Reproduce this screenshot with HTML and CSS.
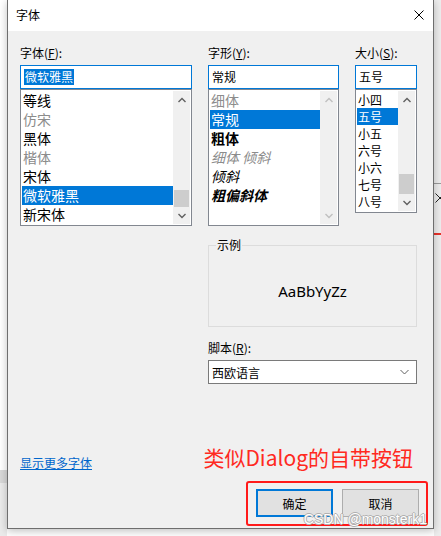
FILE: index.html
```html
<!DOCTYPE html>
<html lang="zh-CN">
<head>
  <meta charset="UTF-8">
  <meta name="viewport" content="width=device-width, initial-scale=1.0">
  <title>字体</title>
  <link rel="stylesheet" href="styles.css">
</head>
<body>
  <!-- windows lying behind the dialog -->
  <div class="desk-left">
    <div class="desk-left-bar"></div>
  </div>
  <div class="desk-right">
    <div class="desk-right-line"></div>
    <svg class="desk-right-close" width="7" height="10" viewBox="0 0 7 10">
      <path d="M0.5 0.5 L9.5 9.5 M9.5 0.5 L0.5 9.5" stroke="#222" stroke-width="1" fill="none"/>
    </svg>
    <div class="desk-right-red"></div>
  </div>

  <div class="dialog">
    <div class="titlebar">
      <span class="title">字体</span>
      <svg class="close-icon" width="10" height="10" viewBox="0 0 10 10">
        <path d="M0.5 0.5 L9.5 9.5 M9.5 0.5 L0.5 9.5" stroke="#000" stroke-width="1" fill="none"/>
      </svg>
    </div>

    <div class="dialog-body">
      <div class="font-grid">
        <!-- font family -->
        <div class="field">
          <label class="field-label">字体(<u>F</u>):</label>
          <div class="textbox"><span class="selected-text">微软雅黑</span></div>
          <div class="listbox list-family">
            <ul class="list-items">
              <li>等线</li>
              <li class="faint">仿宋</li>
              <li>黑体</li>
              <li class="faint">楷体</li>
              <li>宋体</li>
              <li class="active">微软雅黑</li>
              <li>新宋体</li>
            </ul>
            <div class="scrollbar">
              <div class="scroll-btn">
                <svg width="8" height="6" viewBox="0 0 8 6"><path d="M0.5 5 L4 1.5 L7.5 5" class="chev"/></svg>
              </div>
              <div class="scroll-track"><div class="scroll-thumb thumb-family"></div></div>
              <div class="scroll-btn">
                <svg width="8" height="6" viewBox="0 0 8 6"><path d="M0.5 1 L4 4.5 L7.5 1" class="chev"/></svg>
              </div>
            </div>
          </div>
        </div>

        <!-- font style -->
        <div class="field">
          <label class="field-label">字形(<u>Y</u>):</label>
          <div class="textbox">常规</div>
          <div class="listbox list-style">
            <ul class="list-items">
              <li class="faint">细体</li>
              <li class="active">常规</li>
              <li class="bold">粗体</li>
              <li class="faint italic">细体 倾斜</li>
              <li class="italic">倾斜</li>
              <li class="bold italic">粗偏斜体</li>
            </ul>
            <div class="scrollbar disabled">
              <div class="scroll-btn">
                <svg width="8" height="6" viewBox="0 0 8 6"><path d="M0.5 5 L4 1.5 L7.5 5" class="chev"/></svg>
              </div>
              <div class="scroll-track"></div>
              <div class="scroll-btn">
                <svg width="8" height="6" viewBox="0 0 8 6"><path d="M0.5 1 L4 4.5 L7.5 1" class="chev"/></svg>
              </div>
            </div>
          </div>
        </div>

        <!-- font size -->
        <div class="field">
          <label class="field-label">大小(<u>S</u>):</label>
          <div class="textbox">五号</div>
          <div class="listbox list-size">
            <ul class="list-items">
              <li>小四</li>
              <li class="active">五号</li>
              <li>小五</li>
              <li>六号</li>
              <li>小六</li>
              <li>七号</li>
              <li>八号</li>
            </ul>
            <div class="scrollbar">
              <div class="scroll-btn">
                <svg width="8" height="6" viewBox="0 0 8 6"><path d="M0.5 5 L4 1.5 L7.5 5" class="chev"/></svg>
              </div>
              <div class="scroll-track"><div class="scroll-thumb thumb-size"></div></div>
              <div class="scroll-btn">
                <svg width="8" height="6" viewBox="0 0 8 6"><path d="M0.5 1 L4 4.5 L7.5 1" class="chev"/></svg>
              </div>
            </div>
          </div>
        </div>

        <fieldset class="sample">
          <legend>示例</legend>
          <div class="sample-text">AaBbYyZz</div>
        </fieldset>

        <div class="script-field">
          <label class="field-label">脚本(<u>R</u>):</label>
          <div class="combobox">
            <span>西欧语言</span>
            <svg width="9" height="6" viewBox="0 0 9 6"><path d="M0.5 1 L4.5 5 L8.5 1" stroke="#606060" stroke-width="1" fill="none"/></svg>
          </div>
        </div>
      </div>

      <div class="extra-row">
        <a class="more-fonts" href="#">显示更多字体</a>
        <span class="note">类似Dialog的自带按钮</span>
      </div>
    </div>

    <div class="footer">
      <div class="button-frame">
        <button class="btn btn-default">确定</button>
        <button class="btn">取消</button>
      </div>
    </div>

    <span class="watermark">CSDN @monsterk1</span>
  </div>
</body>
</html>
```

FILE: styles.css
```css
* {
  margin: 0;
  padding: 0;
  box-sizing: border-box;
}

body {
  width: 441px;
  height: 536px;
  overflow: hidden;
  position: relative;
  background: #ffffff;
  font-family: "Noto Sans CJK SC", "Noto Sans", sans-serif;
  font-size: 12px;
  color: #000;
}

/* background windows */
.desk-left {
  position: absolute;
  left: 0;
  top: 470px;
  width: 7px;
  height: 66px;
  background: #ebebeb;
}

.desk-left-bar {
  height: 13px;
  background: #d9d9d9;
}

.desk-right {
  position: absolute;
  left: 434px;
  top: 0;
  width: 7px;
  height: 536px;
  background: #ededed;
}

.desk-right-line {
  position: absolute;
  top: 183px;
  left: 0;
  width: 7px;
  height: 1px;
  background: #9a9a9a;
}

.desk-right-close {
  position: absolute;
  top: 193px;
  left: 1px;
}

.desk-right-red {
  position: absolute;
  top: 233px;
  left: 0;
  width: 7px;
  height: 2px;
  background: #e8322a;
}

/* dialog window */
.dialog {
  position: relative;
  z-index: 1;
  margin-left: 7px;
  width: 427px;
  height: 529px;
  display: flex;
  flex-direction: column;
  background: #f0f0f0;
  border: 1px solid #6e6e6e;
  border-top: 0;
  box-shadow: 0 2px 8px rgba(0, 0, 0, 0.25);
}

.titlebar {
  height: 31px;
  flex-shrink: 0;
  display: flex;
  align-items: center;
  justify-content: space-between;
  padding: 0 9px 1px 8px;
  background: #fff;
}

.title {
  font-size: 12px;
  line-height: 16px;
}

.dialog-body {
  flex: 1;
  display: flex;
  flex-direction: column;
  padding: 14px 0 0 12px;
}

.font-grid {
  display: grid;
  grid-template-columns: 172px 131px 62px;
  column-gap: 16px;
  align-items: start;
}

.field-label {
  display: block;
  font-size: 12px;
  line-height: 16px;
  margin-bottom: 4px;
}

.field-label u {
  text-underline-offset: 1px;
}

.textbox {
  height: 24px;
  display: flex;
  align-items: center;
  padding-left: 3px;
  background: #fff;
  border: 1px solid #0078d7;
  font-size: 12px;
  line-height: 16px;
}

.selected-text {
  background: #0078d7;
  color: #fff;
  padding: 0 1px;
}

.listbox {
  display: flex;
  padding: 1px;
  background: #fff;
  border: 1px solid #828790;
}

.list-family,
.list-style {
  height: 137px;
}

.list-size {
  height: 124px;
}

.list-items {
  flex: 1;
  list-style: none;
  overflow: hidden;
}

.list-items li {
  height: 19px;
  line-height: 19px;
  padding-left: 1px;
  font-size: 14px;
  white-space: nowrap;
}

.list-size .list-items li {
  height: 17px;
  line-height: 17px;
  font-size: 12px;
}

.list-items .faint {
  color: #8c8c8c;
}

.list-items .bold {
  font-weight: 700;
}

.list-items .italic {
  font-style: italic;
}

.list-items .active {
  background: #0078d7;
  color: #fff;
}

.scrollbar {
  width: 17px;
  display: flex;
  flex-direction: column;
  background: #f0f0f0;
}

.scroll-btn {
  height: 17px;
  display: flex;
  align-items: center;
  justify-content: center;
}

.chev {
  fill: none;
  stroke: #606060;
  stroke-width: 1.4;
}

.scrollbar.disabled .chev {
  stroke: #c0c0c0;
}

.scroll-track {
  flex: 1;
  display: flex;
  flex-direction: column;
  justify-content: flex-end;
}

.scroll-thumb {
  margin: 0 1px;
  background: #cdcdcd;
}

.thumb-family {
  height: 17px;
}

.thumb-size {
  height: 20px;
}

/* sample preview */
.sample {
  grid-column: 2 / 4;
  margin-top: 11px;
  min-width: 0;
  border: 1px solid #dcdcdc;
  padding: 0;
}

.sample legend {
  margin-left: 7px;
  padding: 0 1px;
  font-size: 12px;
  line-height: 16px;
}

.sample-text {
  height: 73px;
  padding-top: 3px;
  display: flex;
  align-items: center;
  justify-content: center;
  font-family: "Noto Sans", sans-serif;
  font-size: 15px;
}

.script-field {
  grid-column: 2 / 4;
  margin-top: 13px;
}

.combobox {
  height: 24px;
  display: flex;
  align-items: center;
  justify-content: space-between;
  padding: 0 7px 0 3px;
  background: #fff;
  border: 1px solid #7a7a7a;
  font-size: 12px;
}

.extra-row {
  margin-top: auto;
  display: flex;
  align-items: flex-end;
}

.more-fonts {
  font-size: 12px;
  line-height: 16px;
  color: #0066cc;
  text-decoration: underline;
}

.note {
  margin-left: auto;
  margin-right: 20px;
  font-size: 21px;
  line-height: 28px;
  color: #ff2a1f;
}

/* dialog buttons */
.footer {
  flex-shrink: 0;
  display: flex;
  justify-content: flex-end;
  margin-top: 10px;
  padding: 0 5px 2px 0;
}

.button-frame {
  display: flex;
  gap: 9px;
  padding: 6px 7px 7px 8px;
  border: 2px solid #ff1a1a;
  border-radius: 3px;
}

.btn {
  width: 77px;
  height: 28px;
  font-family: "Noto Sans CJK SC", sans-serif;
  font-size: 12px;
  color: #000;
  background: #e1e1e1;
  border: 1px solid #adadad;
}

.btn-default {
  border: 2px solid #0078d7;
}

.watermark {
  position: absolute;
  right: 6px;
  bottom: 1px;
  font-family: "Liberation Sans", Arial, sans-serif;
  font-size: 14px;
  line-height: 16px;
  color: #fff;
  text-shadow: 1px 0 #b0b0b0, -1px 0 #b0b0b0, 0 1px #b0b0b0, 0 -1px #b0b0b0;
}
```
